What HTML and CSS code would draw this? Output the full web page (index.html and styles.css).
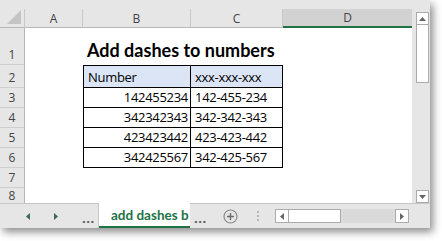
FILE: index.html
```html
<!DOCTYPE html>
<html>
<head>
<meta charset="utf-8">
<link rel="stylesheet" href="styles.css">
</head>
<body>
<div class="window">
  <div class="topstrip"></div>
  <div class="main">
    <div class="sheet">
      <div class="corner"><svg width="14" height="14" viewBox="0 0 14 14"><polygon points="14,0 14,14 0,14" fill="#c4c4c4"/></svg></div>
      <div class="colh">A</div>
      <div class="colh">B</div>
      <div class="colh">C</div>
      <div class="colh sel">D</div>

      <div class="rowh">1</div>
      <div class="cell"></div>
      <div class="cell title"><span>Add dashes to numbers</span></div>
      <div class="cell"></div>
      <div class="cell"></div>

      <div class="rowh">2</div>
      <div class="cell"></div>
      <div class="cell t th tl">Number</div>
      <div class="cell t th">xxx-xxx-xxx</div>
      <div class="cell"></div>

      <div class="rowh">3</div>
      <div class="cell"></div>
      <div class="cell t tl num">142455234</div>
      <div class="cell t">142-455-234</div>
      <div class="cell"></div>

      <div class="rowh">4</div>
      <div class="cell"></div>
      <div class="cell t tl num">342342343</div>
      <div class="cell t">342-342-343</div>
      <div class="cell"></div>

      <div class="rowh">5</div>
      <div class="cell"></div>
      <div class="cell t tl num">423423442</div>
      <div class="cell t">423-423-442</div>
      <div class="cell"></div>

      <div class="rowh">6</div>
      <div class="cell"></div>
      <div class="cell t tl num">342425567</div>
      <div class="cell t">342-425-567</div>
      <div class="cell"></div>

      <div class="rowh">7</div>
      <div class="cell"></div>
      <div class="cell"></div>
      <div class="cell"></div>
      <div class="cell"></div>

      <div class="rowh last">8</div>
      <div class="cell"></div>
      <div class="cell"></div>
      <div class="cell"></div>
      <div class="cell"></div>
    </div>
    <div class="vscroll">
      <div class="sbtn"><svg width="7" height="4" viewBox="0 0 7 4"><polygon points="0,4 7,4 3.5,0" fill="#666"/></svg></div>
      <div class="vthumb"></div>
      <div class="vtrack"></div>
      <div class="sbtn"><svg width="7" height="4" viewBox="0 0 7 4"><polygon points="0,0 7,0 3.5,4" fill="#666"/></svg></div>
    </div>
  </div>
  <div class="tabbar">
    <div class="navs">
      <span class="nav"><svg width="4" height="7" viewBox="0 0 4 7"><polygon points="4,0 4,7 0,3.5" fill="#3b6b52"/></svg></span>
      <span class="nav"><svg width="4" height="7" viewBox="0 0 4 7"><polygon points="0,0 0,7 4,3.5" fill="#3b6b52"/></svg></span>
      <span class="dots">...</span>
    </div>
    <div class="tab"><span>add dashes b</span></div>
    <span class="dots more">...</span>
    <span class="plus"><svg width="15" height="15" viewBox="0 0 15 15"><circle cx="7.5" cy="7.5" r="6.5" fill="none" stroke="#8a8a8a" stroke-width="1.2"/><path d="M7.5 4v7M4 7.5h7" stroke="#6a6a6a" stroke-width="1.4"/></svg></span>
    <span class="vdots"><i></i><i></i><i></i></span>
    <div class="hscroll">
      <div class="hbtn"><svg width="4" height="7" viewBox="0 0 4 7"><polygon points="4,0 4,7 0,3.5" fill="#666"/></svg></div>
      <div class="hthumb"></div>
      <div class="htrack"></div>
      <div class="hbtn"><svg width="4" height="7" viewBox="0 0 4 7"><polygon points="0,0 0,7 4,3.5" fill="#666"/></svg></div>
    </div>
  </div>
</div>
</body>
</html>
```
FILE: styles.css
```css
html, body {
  margin: 0;
  padding: 0;
  background: #ffffff;
}
body {
  width: 442px;
  height: 241px;
  overflow: hidden;
  font-family: "Lato", "Open Sans", sans-serif;
}
.window {
  width: 430px;
  height: 228px;
  background: #e6e6e6;
  box-shadow: 3px 4px 8px rgba(0, 0, 0, 0.45);
  display: flex;
  flex-direction: column;
  overflow: hidden;
}
.topstrip {
  height: 9px;
  background: #e6e6e6;
}
.main {
  display: flex;
  height: 194px;
}
.sheet {
  width: 412px;
  display: grid;
  grid-template-columns: 25px 58px 108px 92px 129px;
  grid-template-rows: 19px 37px 23px 20px 20px 20px 20px 20px 15px;
  background: #fff;
  overflow: hidden;
}
.corner {
  background: #e6e6e6;
  border-right: 1px solid #c8c8c8;
  border-bottom: 1px solid #b8b8b8;
  display: flex;
  align-items: flex-end;
  justify-content: flex-end;
  padding: 0 3px 3px 0;
}
.colh {
  background: #e6e6e6;
  border-right: 1px solid #c8c8c8;
  border-bottom: 1px solid #b8b8b8;
  display: flex;
  align-items: center;
  justify-content: center;
  font-size: 12px;
  color: #444;
  font-family: "Open Sans", sans-serif;
}
.colh.sel {
  background: #d2d2d2;
  border-bottom: 2px solid #217346;
  border-right: none;
}
.rowh {
  background: #e6e6e6;
  border-right: 1px solid #b8b8b8;
  border-bottom: 1px solid #cfcfcf;
  display: flex;
  align-items: flex-end;
  justify-content: center;
  padding-bottom: 1px;
  font-size: 12px;
  color: #444;
  font-family: "Open Sans", sans-serif;
  line-height: 16px;
}
.rowh.last {
  border-bottom: none;
  align-items: flex-start;
  padding: 0;
  line-height: 15px;
}
.cell {
  background: #fff;
  font-size: 13px;
  color: #000;
  display: flex;
  align-items: flex-end;
  padding: 0 3px 1px 4px;
  white-space: nowrap;
  line-height: 17px;
  font-family: "Open Sans", sans-serif;
  letter-spacing: -0.3px;
}
.title {
  overflow: visible;
  position: relative;
  z-index: 1;
  padding-bottom: 5px;
}
.title span {
  font-family: "Lato", sans-serif;
  font-weight: 700;
  font-size: 18px;
  color: #000;
  letter-spacing: 0;
  line-height: 20px;
}
.t {
  border-right: 1px solid #000;
  border-bottom: 1px solid #000;
}
.tl {
  border-left: 1px solid #000;
}
.th {
  border-top: 1px solid #000;
  background: #dbe5f6;
}
.num {
  justify-content: flex-end;
  padding-right: 2px;
}
.vscroll {
  width: 18px;
  display: flex;
  flex-direction: column;
  padding: 3px 1px 0 4px;
  box-sizing: border-box;
  background: #e6e6e6;
}
.sbtn {
  height: 13px;
  background: #fff;
  border: 1px solid #ababab;
  box-sizing: border-box;
  display: flex;
  align-items: center;
  justify-content: center;
}
.vthumb {
  height: 58px;
  background: #fff;
  border: 1px solid #ababab;
  border-top: none;
  box-sizing: border-box;
}
.vtrack {
  flex: 1;
}
.tabbar {
  height: 25px;
  border-top: 1px solid #c6c6c6;
  display: flex;
  align-items: stretch;
  background: #e6e6e6;
  box-sizing: border-box;
}
.navs {
  width: 99px;
  display: flex;
  align-items: center;
  padding-left: 26px;
  box-sizing: border-box;
  border-right: 1px solid #c6c6c6;
}
.nav {
  width: 28px;
  display: flex;
  align-items: center;
}
.dots {
  font-family: "Open Sans", sans-serif;
  font-size: 13px;
  font-weight: 700;
  color: #555;
  letter-spacing: 0.5px;
  line-height: 12px;
  padding-top: 4px;
}
.tab {
  width: 91px;
  margin-top: -1px;
  background: #fff;
  border-bottom: 2px solid #217346;
  box-sizing: border-box;
  overflow: hidden;
  white-space: nowrap;
  display: flex;
  align-items: center;
  padding-left: 12px;
}
.tab span {
  font-family: "Lato", sans-serif;
  font-weight: 700;
  font-size: 13.5px;
  color: #217346;
}
.more {
  margin-left: 4px;
  display: flex;
  align-items: center;
}
.plus {
  margin-left: 16px;
  display: flex;
  align-items: center;
}
.vdots {
  margin-left: 19px;
  display: flex;
  flex-direction: column;
  justify-content: center;
  gap: 2px;
}
.vdots i {
  display: block;
  width: 2px;
  height: 2px;
  background: #b4b4b4;
}
.hscroll {
  margin-left: 16px;
  width: 134px;
  display: flex;
  align-items: center;
}
.hbtn {
  width: 14px;
  height: 14px;
  background: #fff;
  border: 1px solid #ababab;
  box-sizing: border-box;
  display: flex;
  align-items: center;
  justify-content: center;
}
.hthumb {
  width: 52px;
  height: 14px;
  background: #fff;
  border: 1px solid #ababab;
  border-left: none;
  box-sizing: border-box;
}
.htrack {
  flex: 1;
  height: 14px;
  background: #dadada;
}
```
